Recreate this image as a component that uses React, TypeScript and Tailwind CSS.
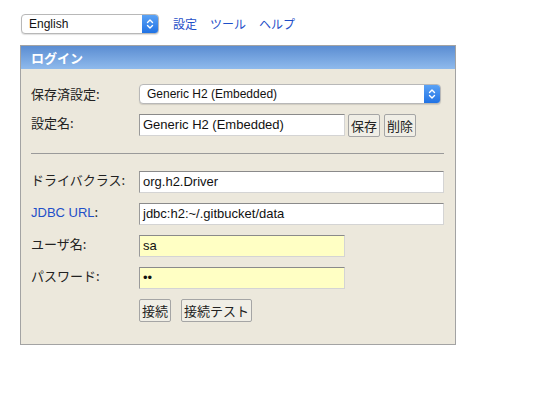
import React from "react";

const jp = { fontFamily: '"Noto Sans CJK JP", "Liberation Sans", sans-serif' };

function MacSelect({ value, width, text }: { value: string; width: string; text: string }) {
  return (
    <div
      className={`flex h-[20px] items-stretch rounded-[4px] border border-[#b8b8b8] bg-white shadow-[0_1px_1px_rgba(0,0,0,0.12)] ${width}`}
    >
      <div className={`flex flex-1 items-center pl-[7px] ${text} text-[#111]`} style={{ fontFamily: '"Liberation Sans", Arial, sans-serif' }}>
        {value}
      </div>
      <div className="flex w-[16px] items-center justify-center rounded-r-[3px] bg-gradient-to-b from-[#5aa2f5] to-[#1f72e4]">
        <svg width="8" height="12" viewBox="0 0 8 12" fill="none" stroke="white" strokeWidth="1.4" strokeLinecap="round" strokeLinejoin="round">
          <path d="M1.5 4.5 L4 2 L6.5 4.5" />
          <path d="M1.5 7.5 L4 10 L6.5 7.5" />
        </svg>
      </div>
    </div>
  );
}

function Input({ value, width, yellow }: { value: string; width: string; yellow?: boolean }) {
  return (
    <div
      className={`flex h-[22px] items-center border border-t-[#8a8a8a] border-l-[#9a9a9a] border-r-[#d4d4d4] border-b-[#d4d4d4] pl-[3px] text-[13px] text-[#111] ${yellow ? "bg-[#ffffc4]" : "bg-white"} ${width}`}
      style={{ fontFamily: '"Liberation Sans", Arial, sans-serif' }}
    >
      {value}
    </div>
  );
}

function Btn({ label }: { label: string }) {
  return (
    <div
      className="flex h-[23px] items-center rounded-[2px] border border-[#a5a5a5] bg-[#f0eee6] px-[2px] text-[13px] text-[#222]"
      style={jp}
    >
      {label}
    </div>
  );
}

function Label({ children }: { children: React.ReactNode }) {
  return (
    <div className="w-[108px] shrink-0 text-[13px] leading-[18px] text-[#222]" style={jp}>
      {children}
    </div>
  );
}

function Row({ label, children, mt }: { label: React.ReactNode; children: React.ReactNode; mt: string }) {
  return (
    <div className={`${mt} flex items-start`}>
      <Label>{label}</Label>
      {children}
    </div>
  );
}

export default function App() {
  return (
    <div className="min-h-[419px] w-[547px] bg-white pl-[20px] pt-[14px]">
      <div className="flex items-center pl-[1px]">
        <MacSelect value="English" width="w-[138px]" text="text-[12px]" />
        <div className="ml-[14px] flex gap-[13px] text-[12px] text-[#1f4fc8]" style={jp}>
          <span>設定</span>
          <span>ツール</span>
          <span>ヘルプ</span>
        </div>
      </div>

      <div className="mt-[11px] h-[300px] w-[436px] border border-[#a3a3a3] bg-[#ece8dc]">
        <div
          className="flex h-[23px] items-center bg-gradient-to-b from-[#5b8dd2] to-[#8fbaec] pl-[10px] text-[13px] font-bold text-white"
          style={jp}
        >
          ログイン
        </div>

        <div className="pl-[10px] pr-[11px]">
          <div className="mt-[15px] flex items-center">
            <Label>保存済設定:</Label>
            <MacSelect value="Generic H2 (Embedded)" width="w-[302px]" text="text-[12px]" />
          </div>

          <Row mt="mt-[10px]" label="設定名:">
            <Input value="Generic H2 (Embedded)" width="w-[206px]" />
            <div className="ml-[3px] flex gap-[4px]">
              <Btn label="保存" />
              <Btn label="削除" />
            </div>
          </Row>

          <div className="mt-[16px] h-px w-[413px] bg-[#9a9a9a]" />

          <Row mt="mt-[17px]" label="ドライバクラス:">
            <Input value="org.h2.Driver" width="w-[305px]" />
          </Row>

          <Row
            mt="mt-[10px]"
            label={
              <>
                <span className="text-[#1f4fc8]" style={{ fontFamily: '"Liberation Sans", Arial, sans-serif' }}>JDBC URL</span>:
              </>
            }
          >
            <Input value="jdbc:h2:~/.gitbucket/data" width="w-[305px]" />
          </Row>

          <Row mt="mt-[10px]" label="ユーザ名:">
            <Input value="sa" width="w-[206px]" yellow />
          </Row>

          <Row mt="mt-[10px]" label="パスワード:">
            <Input value="••" width="w-[206px]" yellow />
          </Row>

          <div className="ml-[108px] mt-[10px] flex gap-[10px]">
            <Btn label="接続" />
            <Btn label="接続テスト" />
          </div>
        </div>
      </div>
    </div>
  );
}
